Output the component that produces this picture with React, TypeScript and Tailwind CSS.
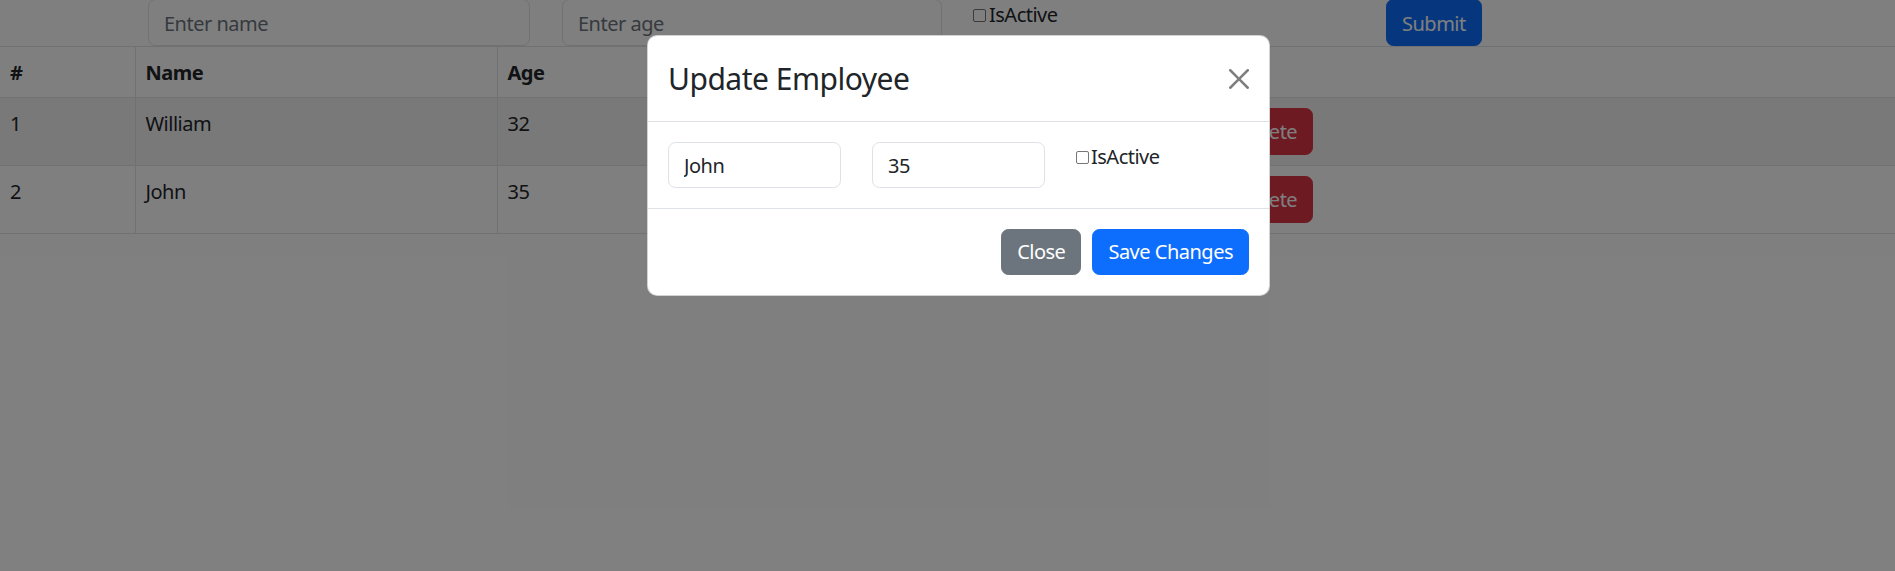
import { useState } from "react";

type Employee = { id: number; name: string; age: number; isActive: boolean };

const employees: Employee[] = [
  { id: 1, name: "William", age: 32, isActive: true },
  { id: 2, name: "John", age: 35, isActive: false },
];

function CloseIcon() {
  return (
    <svg aria-hidden viewBox="0 0 16 16" className="size-[20px]" fill="currentColor">
      <path d="M.293.293a1 1 0 0 1 1.414 0L8 6.586 14.293.293a1 1 0 1 1 1.414 1.414L9.414 8l6.293 6.293a1 1 0 0 1-1.414 1.414L8 9.414l-6.293 6.293a1 1 0 0 1-1.414-1.414L6.586 8 .293 1.707a1 1 0 0 1 0-1.414z" />
    </svg>
  );
}

function CheckBox() {
  return (
    <span className="inline-block size-[13px] shrink-0 rounded-[2px] border border-[#767676] bg-white" />
  );
}

export default function App() {
  const [name, setName] = useState("John");
  const [age, setAge] = useState("35");

  return (
    <div className="relative h-[571px] w-full overflow-hidden bg-white font-['Noto_Sans',sans-serif] text-[20px] leading-[30px] tracking-[-0.025em] text-[#212529]">
      {/* add form */}
      <div className="-mt-[1px] flex items-start">
        <div className="w-[148px] shrink-0" />
        <input
          placeholder="Enter name"
          className="h-[47px] w-[382px] shrink-0 rounded-[7.5px] border border-[#dee2e6] px-[15px] pt-[2px] placeholder:text-[#6c757d]"
        />
        <div className="w-[32px] shrink-0" />
        <input
          placeholder="Enter age"
          className="h-[47px] w-[380px] shrink-0 rounded-[7.5px] border border-[#dee2e6] px-[15px] pt-[2px] placeholder:text-[#6c757d]"
        />
        <div className="w-[31px] shrink-0" />
        <label className="flex w-[413px] shrink-0 items-center gap-[3px] pt-[1px]">
          <CheckBox />
          IsActive
        </label>
        <button className="h-[47px] rounded-[7.5px] border border-[#0d6efd] bg-[#0d6efd] px-[15px] pt-[2px] text-white">
          Submit
        </button>
      </div>

      {/* employee table */}
      <table className="w-full table-fixed border-collapse">
        <colgroup>
          <col className="w-[135px]" />
          <col className="w-[362px]" />
          <col className="w-[360px]" />
          <col className="w-[285px]" />
          <col />
        </colgroup>
        <thead>
          <tr className="border-y border-[#dee2e6] text-left">
            <th className="border-r border-[#dee2e6] p-[10px] pt-[11px] pb-[9px] font-bold">#</th>
            <th className="border-r border-[#dee2e6] p-[10px] pt-[11px] pb-[9px] font-bold">Name</th>
            <th className="border-r border-[#dee2e6] p-[10px] pt-[11px] pb-[9px] font-bold">Age</th>
            <th className="border-r border-[#dee2e6] p-[10px] pt-[11px] pb-[9px] font-bold">IsActive</th>
            <th className="p-[10px] pt-[11px] pb-[9px] font-bold">Actions</th>
          </tr>
        </thead>
        <tbody>
          {employees.map((e, i) => (
            <tr key={e.id} className={`border-b border-[#dee2e6] ${i % 2 === 0 ? "bg-black/5" : ""}`}>
              <td className="border-r border-[#dee2e6] p-[10px] pt-[11px] align-top">{e.id}</td>
              <td className="border-r border-[#dee2e6] p-[10px] pt-[11px] align-top">{e.name}</td>
              <td className="border-r border-[#dee2e6] p-[10px] pt-[11px] align-top">{e.age}</td>
              <td className="border-r border-[#dee2e6] p-[10px] pt-[11px] align-top">{e.isActive ? "Active" : "Inactive"}</td>
              <td className="p-[10px] align-top">
                <div className="flex gap-[5px]">
                  <button className="h-[47px] rounded-[7.5px] border border-[#0d6efd] bg-[#0d6efd] px-[15px] text-white">
                    Edit
                  </button>
                  <button className="h-[47px] rounded-[7.5px] border border-[#dc3545] bg-[#dc3545] px-[15px] text-white">
                    Delete
                  </button>
                </div>
              </td>
            </tr>
          ))}
        </tbody>
      </table>

      {/* backdrop */}
      <div className="absolute inset-0 bg-black/50" />

      {/* update modal */}
      <div className="absolute left-[647px] top-[35px] w-[623px] rounded-[10px] border border-black/[0.175] bg-white">
        <div className="flex items-center justify-between border-b border-[#dee2e6] p-[20px]">
          <h4 className="text-[30px] leading-[45px] font-normal">Update Employee</h4>
          <button type="button" className="text-black opacity-50">
            <CloseIcon />
          </button>
        </div>
        <div className="grid grid-cols-3 gap-[31px] p-[20px]">
          <input
            value={name}
            onChange={(ev) => setName(ev.target.value)}
            className="h-[46px] w-full rounded-[7.5px] border border-[#dee2e6] px-[15px]"
          />
          <input
            value={age}
            onChange={(ev) => setAge(ev.target.value)}
            className="h-[46px] w-full rounded-[7.5px] border border-[#dee2e6] px-[15px]"
          />
          <label className="flex h-[30px] items-center gap-[2px]">
            <CheckBox />
            IsActive
          </label>
        </div>
        <div className="flex justify-end gap-[11px] border-t border-[#dee2e6] p-[20px]">
          <button className="h-[46px] rounded-[7.5px] border border-[#6c757d] bg-[#6c757d] px-[15px] text-white">
            Close
          </button>
          <button className="h-[46px] rounded-[7.5px] border border-[#0d6efd] bg-[#0d6efd] px-[15px] text-white">
            Save Changes
          </button>
        </div>
      </div>
    </div>
  );
}
